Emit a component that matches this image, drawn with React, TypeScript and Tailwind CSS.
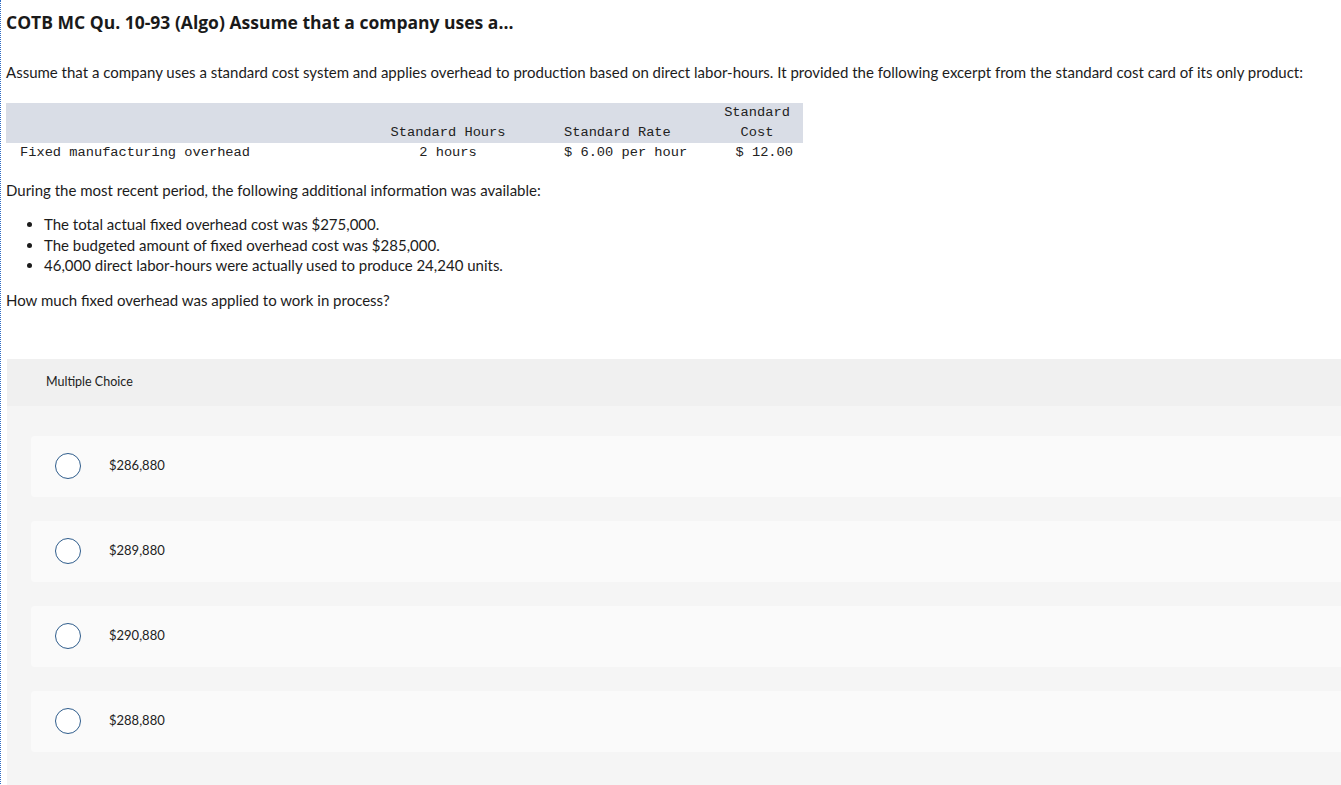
import React from "react";

const sans = { fontFamily: "Lato, 'Open Sans', sans-serif" };

function Radio() {
  return <div className="w-[26px] h-[26px] rounded-full border-[1.5px] border-[#2f5d8c] bg-white shrink-0" />;
}

function Option({ label }: { label: string }) {
  return (
    <div className="h-[61px] ml-[24px] bg-[#fafafa] rounded-l-[4px] flex items-center pl-[24px]">
      <Radio />
      <span className="ml-[28px] text-[13px] text-[#222]">{label}</span>
    </div>
  );
}

export default function App() {
  return (
    <div className="min-h-[785px] border-l border-dotted border-[#2f6cc4] bg-white text-[#1c1c1c] overflow-hidden" style={sans}>
      <div className="pl-[5px]">
        <h1
          className="pt-[11px] text-[17.5px] leading-[22px] font-bold text-[#1a1a1a]"
          style={{ fontFamily: "'Open Sans', Lato, sans-serif" }}
        >
          COTB MC Qu. 10-93 (Algo) Assume that a company uses a...
        </h1>
        <p className="mt-[28px] text-[15px] leading-[22px]">
          Assume that a company uses a standard cost system and applies overhead to production based on direct labor-hours. It provided the following excerpt from the standard cost card of its only product:
        </p>
        <table
          className="mt-[20px] w-[797px] table-fixed border-collapse text-[13.7px] text-[#222]"
          style={{ fontFamily: "'Liberation Mono', 'DejaVu Sans Mono', monospace" }}
        >
          <colgroup>
            <col className="w-[374px]" />
            <col className="w-[136px]" />
            <col className="w-[195px]" />
            <col className="w-[92px]" />
          </colgroup>
          <thead>
            <tr className="bg-[#d9dde6] align-bottom">
              <th className="font-normal h-[40px] pb-[1px]"></th>
              <th className="font-normal text-center leading-[20px] pb-0">Standard Hours</th>
              <th className="font-normal text-left pl-[48px] leading-[20px]">Standard Rate</th>
              <th className="font-normal text-center leading-[20px]">
                Standard
                <br />
                Cost
              </th>
            </tr>
          </thead>
          <tbody>
            <tr className="h-[20px] leading-[20px]">
              <td className="pl-[14px]">Fixed manufacturing overhead</td>
              <td className="text-center">2 hours</td>
              <td className="pl-[48px]">$ 6.00 per hour</td>
              <td className="text-right pr-[10px]">$ 12.00</td>
            </tr>
          </tbody>
        </table>
        <p className="mt-[17px] text-[15px] leading-[20px]">
          During the most recent period, the following additional information was available:
        </p>
        <ul className="mt-[14px] text-[15px] leading-[20.5px] list-disc pl-[38px]">
          <li>The total actual fixed overhead cost was $275,000.</li>
          <li>The budgeted amount of fixed overhead cost was $285,000.</li>
          <li>46,000 direct labor-hours were actually used to produce 24,240 units.</li>
        </ul>
        <p className="mt-[14px] text-[15px] leading-[20px]">How much fixed overhead was applied to work in process?</p>
        <div className="mt-[49px] ml-[1px] bg-[#f5f5f5] pb-[40px]">
          <div className="h-[47px] bg-[#f0f0f0] flex items-center pl-[39px] text-[12.5px] text-[#222]">Multiple Choice</div>
          <div className="pt-[30px] flex flex-col gap-[24px]">
            <Option label="$286,880" />
            <Option label="$289,880" />
            <Option label="$290,880" />
            <Option label="$288,880" />
          </div>
        </div>
      </div>
    </div>
  );
}
